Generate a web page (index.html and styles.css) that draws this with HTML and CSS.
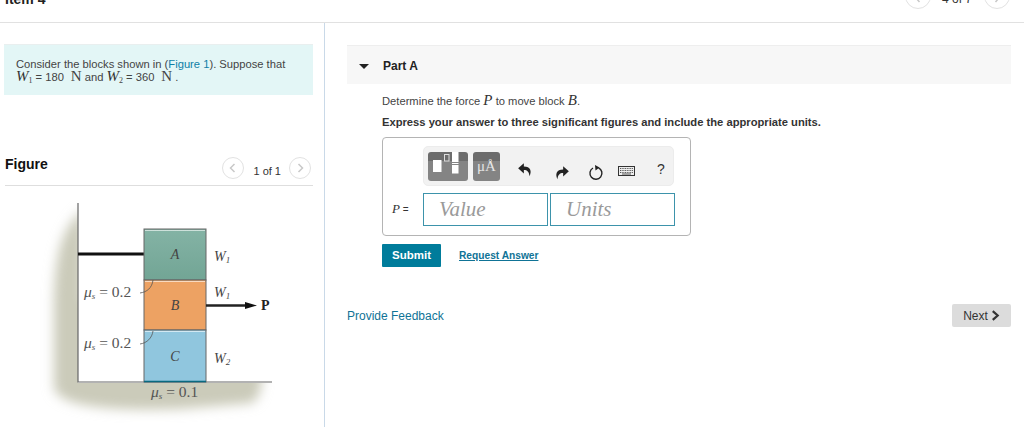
FILE: index.html
```html
<!DOCTYPE html>
<html lang="en">
<head>
<meta charset="utf-8">
<title>Item 4</title>
<link rel="stylesheet" href="styles.css">
</head>
<body>
<header class="top">
  <div class="item-title">Item 4</div>
  <div class="top-pager">
    <span class="circle big"><svg width="24" height="24" viewBox="0 0 24 24"><path d="M13.500 10 L10 14 L13.500 18" class="chev"/></svg></span>
    <span class="top-count">4 of 7</span>
    <span class="circle big"><svg width="24" height="24" viewBox="0 0 24 24"><path d="M10.500 10 L14 14 L10.500 18" class="chev"/></svg></span>
  </div>
</header>
<main class="main">
  <section class="left">
    <div class="intro">
      <p>Consider the blocks shown in (<a class="link">Figure 1</a>). Suppose that</p>
      <p><span class="m">W</span><sub class="s">1</sub> = 180 <span class="r">&nbsp;N</span> and <span class="m">W</span><sub class="s">2</sub> = 360 <span class="r">&nbsp;N</span> .</p>
    </div>
    <div class="fig-head">
      <h2>Figure</h2>
      <div class="fig-pager">
        <span class="circle"><svg width="20" height="20" viewBox="0 0 20 20"><path d="M11.500 6 L7.500 10 L11.500 14" class="chev"/></svg></span>
        <span class="fig-count">1 of 1</span>
        <span class="circle"><svg width="20" height="20" viewBox="0 0 20 20"><path d="M8.500 6 L12.500 10 L8.500 14" class="chev"/></svg></span>
      </div>
    </div>
    <svg class="figure" width="240" height="228" viewBox="40 199 240 228">
      <defs>
        <filter id="soft" x="-25%" y="-25%" width="150%" height="150%"><feGaussianBlur stdDeviation="6"/></filter>
        <linearGradient id="ga" x1="0" y1="0" x2="0" y2="1"><stop offset="0" stop-color="#84b3a5"/><stop offset="1" stop-color="#72a595"/></linearGradient>
      </defs>
      <path d="M84 208 C62 226 55 252 54 300 L54 388 C62 406 110 410 180 408 L252 402 C260 396 262 388 262 370 L250 300 L84 300 Z" fill="#cbcbba" filter="url(#soft)"/>
      <rect x="78" y="195" width="202" height="187" fill="#fff"/>
      <path d="M78 202 V381 H272" class="wall"/>
      <path d="M78 253 H144" class="rope"/>
      <rect x="144" y="228" width="62" height="51" fill="url(#ga)" class="block"/>
      <rect x="144" y="279" width="62" height="50" fill="#eda263" class="block"/>
      <rect x="144" y="329" width="62" height="52" fill="#90c6de" class="block"/>
      <path d="M145 229.500 H205 M145 280.500 H205 M145 330.500 H205" class="shine"/>
      <path d="M144 380.500 H206" class="base"/>
      <path d="M140 292 C147 291 152 287 153 279" class="thin"/>
      <path d="M140 343 C147 342 152 337 153 330" class="thin"/>
      <path d="M206 304.500 H252" class="rod"/>
      <path d="M257 304.500 L245 301 V308 Z" fill="#111"/>
      <text x="175" y="258" class="lab it" text-anchor="middle">A</text>
      <text x="175" y="309" class="lab it" text-anchor="middle">B</text>
      <text x="175" y="360" class="lab it" text-anchor="middle">C</text>
      <text x="214" y="260" class="lab it">W<tspan class="sb" dy="2">1</tspan></text>
      <text x="214" y="296" class="lab it">W<tspan class="sb" dy="2">1</tspan></text>
      <text x="214" y="362" class="lab it">W<tspan class="sb" dy="2">2</tspan></text>
      <text x="261" y="309" class="lab bold">P</text>
      <text x="84" y="296" class="lab mu"><tspan class="ital">μ</tspan><tspan class="sb ital" dy="2">s</tspan><tspan dy="-2"> = 0.2</tspan></text>
      <text x="84" y="347" class="lab mu"><tspan class="ital">μ</tspan><tspan class="sb ital" dy="2">s</tspan><tspan dy="-2"> = 0.2</tspan></text>
      <text x="151" y="396" class="lab mu"><tspan class="ital">μ</tspan><tspan class="sb ital" dy="2">s</tspan><tspan dy="-2"> = 0.1</tspan></text>
    </svg>
  </section>
  <section class="right">
    <div class="part-bar">
      <span class="tri"></span>
      <span class="part-title">Part A</span>
    </div>
    <div class="part-body">
      <p class="question">Determine the force <span class="m big-m">P</span> to move block <span class="m big-m">B</span>.</p>
      <p class="instruct">Express your answer to three significant figures and include the appropriate units.</p>
      <div class="answer">
        <div class="toolbar">
          <span class="tool tool-wide">
            <svg width="40" height="29" viewBox="0 0 40 29"><rect x="5" y="8" width="8.500" height="12" fill="#fff"/><rect x="16.500" y="2.500" width="4.500" height="6.500" fill="none" stroke="#ddd"/><rect x="24" y="0" width="6.500" height="10" fill="#fff"/><rect x="24" y="11" width="6.500" height="1" fill="#fff"/><rect x="24" y="13" width="6.500" height="8.500" fill="#fff"/></svg>
          </span>
          <span class="tool tool-unit"><span class="unit-text">μÅ</span></span>
          <svg class="ic ic-undo" width="16" height="16" viewBox="0 0 14 14"><path d="M6 1 L1 5.500 L6 10 V7 C9 7 10.500 8.500 11 12.500 C13 8 12 4 6 4 Z" fill="#222"/></svg>
          <svg class="ic ic-redo" width="16" height="16" viewBox="0 0 14 14"><path d="M8 1 L13 5.500 L8 10 V7 C5 7 3.500 8.500 3 12.500 C1 8 2 4 8 4 Z" fill="#222"/></svg>
          <svg class="ic ic-reset" width="16" height="17" viewBox="0 0 16 17"><path d="M10.500 3.800 A6 6 0 1 1 5 4" fill="none" stroke="#222" stroke-width="1.400"/><path d="M7 1 L11.500 3.500 L7.500 6.500 Z" fill="#222"/></svg>
          <svg class="ic ic-keys" width="17" height="10" viewBox="0 0 17 10"><rect x="0.500" y="0.500" width="16" height="9" fill="#eee" stroke="#333"/><path d="M2 2.500 H15 M2 4.500 H15 M2 6.500 H15" stroke="#555" stroke-dasharray="1 .7"/><path d="M4 8 H13" stroke="#555"/></svg>
          <span class="help">?</span>
        </div>
        <div class="inputs">
          <span class="var"><span class="m">P</span> =</span>
          <span class="field">Value</span>
          <span class="field">Units</span>
        </div>
      </div>
      <div class="actions">
        <span class="submit">Submit</span>
        <a class="request">Request Answer</a>
      </div>
    </div>
    <div class="foot">
      <a class="feedback">Provide Feedback</a>
      <span class="next">Next <svg width="9" height="11" viewBox="0 0 8 10"><path d="M1.500 1 L6 5 L1.500 9" fill="none" stroke="#333" stroke-width="2"/></svg></span>
    </div>
  </section>
</main>
</body>
</html>
```
FILE: styles.css
```css
* { box-sizing: border-box; }
html, body { margin: 0; padding: 0; height: 427px; overflow: hidden; background: #fff; }
body { font-family: "Liberation Sans", Arial, sans-serif; font-size: 12px; color: #333; }
p, h2 { margin: 0; }

.top { height: 23px; border-bottom: 1px solid #e1e1e1; display: flex; justify-content: space-between; align-items: flex-end; overflow: hidden; padding: 0 14px 0 5px; }
.item-title { font-weight: bold; font-size: 14px; color: #222; line-height: 16px; margin-bottom: 15px; }
.top-pager { display: flex; align-items: flex-end; gap: 10px; margin-bottom: 13px; }
.top-count { font-size: 12px; line-height: 15px; margin: 0 2px 2px 1px; }
.circle { display: block; width: 22px; height: 22px; border: 1px solid #e2e2e2; border-radius: 50%; flex: none; }
.circle svg { display: block; }
.circle.big { width: 26px; height: 26px; }
.chev { fill: none; stroke: #c8c8c8; stroke-width: 1.5; }

.main { display: flex; height: 404px; }
.left { width: 325px; flex: none; border-right: 1px solid #c9d9e8; padding: 21px 11px 0 4px; }
.intro { height: 51px; background: #e3f6f6; border-top: 1px solid #e9efef; padding: 13px 12px 0 12px; line-height: 13px; font-size: 11.200px; color: #444; }
.intro p { white-space: nowrap; }
.m { font-family: "Liberation Serif", serif; font-style: italic; font-size: 15px; line-height: 0; color: #333; }
.r { font-family: "Liberation Serif", serif; font-size: 15px; line-height: 0; }
.s { font-size: 8px; vertical-align: baseline; position: relative; top: 2px; line-height: 0; font-family: "Liberation Serif", serif; }
.link { color: #0f7fa6; }

.fig-head { margin-top: 50px; height: 41px; border-bottom: 1px solid #dedede; margin-left: 1px; display: flex; justify-content: space-between; align-items: flex-start; padding: 11px 2px 0 0; }
.fig-head h2 { font-size: 14px; line-height: 16px; color: #111; }
.fig-pager { display: flex; align-items: center; padding-top: 1px; }
.fig-count { font-size: 11px; color: #333; margin: 5px 8px 0 9px; }
.figure { display: block; margin: 14px 0 0 36px; }
.wall { fill: none; stroke: #666; stroke-width: 1.200; }
.rope { stroke: #111; stroke-width: 3; }
.rod { stroke: #222; stroke-width: 2.500; }
.block { stroke: #666; stroke-width: 1; }
.shine { fill: none; stroke: #fff; stroke-opacity: .6; stroke-width: 1; }
.base { fill: none; stroke: #0a6a80; stroke-width: 1.500; }
.thin { fill: none; stroke: #555; stroke-width: .8; }
.lab { font-family: "Liberation Serif", serif; font-size: 14px; fill: #444; }
.mu { font-size: 15.500px; fill: #555; }
.it, .ital { font-style: italic; }
.bold { font-weight: bold; fill: #222; }
.sb { font-size: 9px; }

.right { flex: 1; min-width: 0; padding: 22px 13px 0 22px; display: flex; flex-direction: column; }
.part-bar { height: 39px; background: #f7f7f7; border-top: 1px solid #eeeeee; display: flex; align-items: center; padding: 2px 0 0 12px; }
.tri { width: 0; height: 0; border-left: 5px solid transparent; border-right: 5px solid transparent; border-top: 5px solid #222; margin-right: 14px; }
.part-title { font-weight: bold; font-size: 12px; color: #222; }
.part-body { padding: 10px 0 0 35px; }
.question { line-height: 14px; color: #444; font-size: 11.200px; }
.big-m { font-size: 15px; }
.instruct { margin-top: 7px; font-weight: bold; font-size: 11.200px; line-height: 14px; color: #333; }
.answer { width: 309px; height: 99px; margin-top: 8px; border: 1px solid #b4b4b4; border-radius: 4px; padding: 8px 15px 0 40px; }
.toolbar { height: 40px; width: 251px; background: #f2f2f2; border: 1px solid #ececec; border-radius: 5px; display: flex; align-items: center; padding-left: 4px; }
.tool { height: 29px; border-radius: 3px; background: linear-gradient(#6c6c6c 0 32%, #848484 32% 100%); display: flex; align-items: center; justify-content: center; overflow: hidden; }
.tool-wide { width: 40px; }
.tool-unit { width: 27px; margin-left: 5px; }
.unit-text { font-family: "Liberation Serif", serif; font-size: 15px; color: #e6e6e6; }
.ic { display: block; flex: none; }
.ic-undo { margin: 8px 0 0 17px; }
.ic-redo { margin: 14px 0 0 21px; }
.ic-reset { margin: 12px 0 0 18px; }
.ic-keys { margin: 10px 0 0 14px; }
.help { margin: 6px 0 0 22px; font-size: 14px; color: #333; }
.inputs { display: flex; align-items: center; margin-top: 7px; margin-left: -31px; }
.var { width: 31px; flex: none; font-size: 10px; color: #333; white-space: nowrap; }
.var .m { font-size: 13px; }
.field { display: block; flex: none; width: 125px; height: 33px; border: 1px solid #3d93ab; margin-right: 2px; padding-left: 15px; font-family: "Liberation Serif", serif; font-style: italic; font-size: 21px; line-height: 30px; color: #9a9a9a; }
.actions { display: flex; align-items: center; margin-top: 8px; }
.submit { width: 59px; height: 23px; background: #007c9b; color: #fff; font-weight: bold; font-size: 11.500px; line-height: 23px; text-align: center; border-radius: 1px; }
.request { margin-left: 18px; color: #0f7396; font-weight: bold; font-size: 10.200px; text-decoration: underline; }
.foot { display: flex; justify-content: space-between; align-items: center; margin-top: 37px; }
.feedback { color: #0f7396; font-size: 12px; }
.next { width: 59px; height: 23px; background: #dcdcdc; border-radius: 2px; display: flex; align-items: center; justify-content: center; gap: 3px; font-size: 12px; color: #333; }
```
